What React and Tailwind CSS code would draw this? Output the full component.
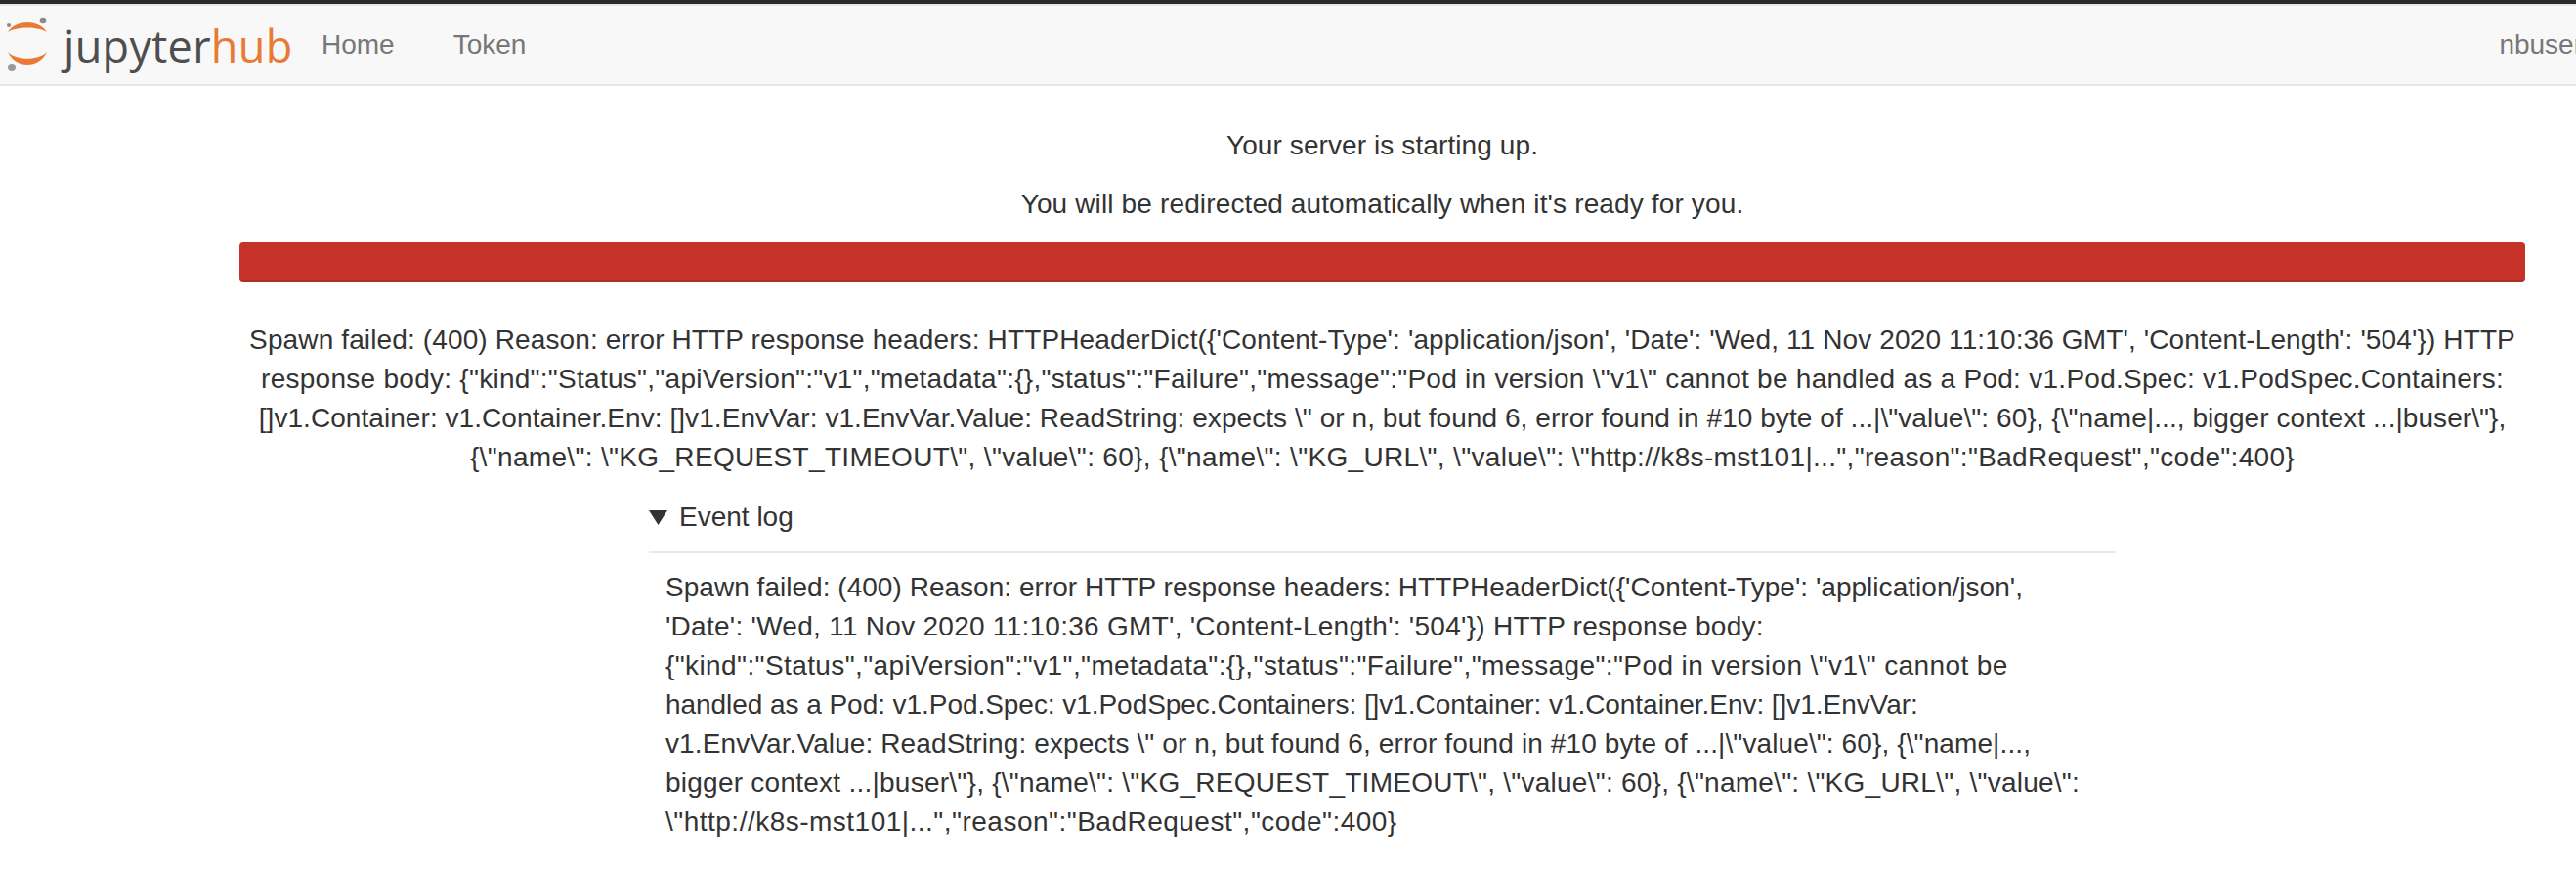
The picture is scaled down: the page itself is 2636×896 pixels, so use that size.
const summaryLines = [
  { text: `Spawn failed: (400) Reason: error HTTP response headers: HTTPHeaderDict({'Content-Type': 'application/json', 'Date': 'Wed, 11 Nov 2020 11:10:36 GMT', 'Content-Length': '504'}) HTTP`, cls: 'tracking-[0.13px]' },
  { text: `response body: {"kind":"Status","apiVersion":"v1","metadata":{},"status":"Failure","message":"Pod in version \\"v1\\" cannot be handled as a Pod: v1.Pod.Spec: v1.PodSpec.Containers:`, cls: 'tracking-[0.27px]' },
  { text: `[]v1.Container: v1.Container.Env: []v1.EnvVar: v1.EnvVar.Value: ReadString: expects \\" or n, but found 6, error found in #10 byte of ...|\\"value\\": 60}, {\\"name|..., bigger context ...|buser\\"},`, cls: 'tracking-[0.06px]' },
  { text: `{\\"name\\": \\"KG_REQUEST_TIMEOUT\\", \\"value\\": 60}, {\\"name\\": \\"KG_URL\\", \\"value\\": \\"http://k8s-mst101|...","reason":"BadRequest","code":400}`, cls: 'tracking-[0.33px]' },
];

const logLines = [
  { text: `Spawn failed: (400) Reason: error HTTP response headers: HTTPHeaderDict({'Content-Type': 'application/json',`, cls: 'tracking-[0.03px]' },
  { text: `'Date': 'Wed, 11 Nov 2020 11:10:36 GMT', 'Content-Length': '504'}) HTTP response body:`, cls: 'tracking-[0.27px]' },
  { text: `{"kind":"Status","apiVersion":"v1","metadata":{},"status":"Failure","message":"Pod in version \\"v1\\" cannot be`, cls: 'tracking-[0.4px]' },
  { text: `handled as a Pod: v1.Pod.Spec: v1.PodSpec.Containers: []v1.Container: v1.Container.Env: []v1.EnvVar:`, cls: 'tracking-[-0.05px]' },
  { text: `v1.EnvVar.Value: ReadString: expects \\" or n, but found 6, error found in #10 byte of ...|\\"value\\": 60}, {\\"name|...,`, cls: 'tracking-[0.11px]' },
  { text: `bigger context ...|buser\\"}, {\\"name\\": \\"KG_REQUEST_TIMEOUT\\", \\"value\\": 60}, {\\"name\\": \\"KG_URL\\", \\"value\\":`, cls: 'tracking-[0.25px]' },
  { text: `\\"http://k8s-mst101|...","reason":"BadRequest","code":400}`, cls: 'tracking-[0.49px]' },
];

function Logo() {
  return (
    <div className="flex w-[293px] shrink-0 items-center">
      <svg width="52" height="60" viewBox="0 0 52 60" className="shrink-0">
        <path d="M2 17 C10 3.7 34 3.7 42 17 C33 11 11 11 2 17 Z" fill="#e87a34" />
        <path d="M2 37 C10 46 34 46 42 37 C34 54.3 10 54.3 2 37 Z" fill="#e87a34" />
        <circle cx="38" cy="5" r="3.3" fill="#8a8a8a" />
        <circle cx="3" cy="10" r="2" fill="#8a8a8a" />
        <circle cx="6" cy="53" r="4" fill="#9a9a9a" />
      </svg>
      <span className="ml-[7px] font-['Open_Sans',sans-serif] text-[45px] leading-none tracking-[0.3px] text-[#4e4e4e]">
        jupyter<span className="text-[#e87a34]">hub</span>
      </span>
    </div>
  );
}

export default function App() {
  return (
    <div className="h-[896px] w-[2636px] overflow-hidden bg-white">
      <div className="w-[2829px] font-['Liberation_Sans',Arial,sans-serif] text-[28px] leading-[40px] text-[#333333]">
        <nav className="border-t-4 border-[#2a2a2c]">
          <div className="flex h-[84px] items-center border-y-2 border-[#e7e7e7] bg-[#f8f8f8] pl-[6px] pr-[30px] text-[#777777]">
            <Logo />
            <a className="ml-[30px]">Home</a>
            <a className="ml-[60px]">Token</a>
            <a className="ml-auto mr-[156px]">nbuser</a>
          </div>
        </nav>

        <main className="mx-auto w-[2339px] pt-[41px] text-center">
          <p className="tracking-[0.1px]">Your server is starting up.</p>
          <p className="mt-[20px] tracking-[0.14px]">You will be redirected automatically when it's ready for you.</p>
          <div className="mt-[19px] h-[40px] rounded-[4px] border-b-2 border-[#ab2d24] bg-[#c63229]" />
          <div className="mt-[40px] whitespace-nowrap">
            {summaryLines.map((line) => (
              <p key={line.text} className={line.cls}>{line.text}</p>
            ))}
          </div>

          {/* Event log */}
          <section className="mx-auto mt-[21px] w-[1501px] text-left">
            <div className="flex items-center border-b-2 border-[#e8e8e8] pb-[15px]">
              <svg width="19" height="15" viewBox="0 0 19 15" className="mr-[12px] shrink-0">
                <path d="M0 0 H19 L9.5 15 Z" fill="#333333" />
              </svg>
              Event log
            </div>
            <div className="whitespace-nowrap px-[17px] pt-[15px]">
              {logLines.map((line) => (
                <p key={line.text} className={line.cls}>{line.text}</p>
              ))}
            </div>
          </section>
        </main>
      </div>
    </div>
  );
}
